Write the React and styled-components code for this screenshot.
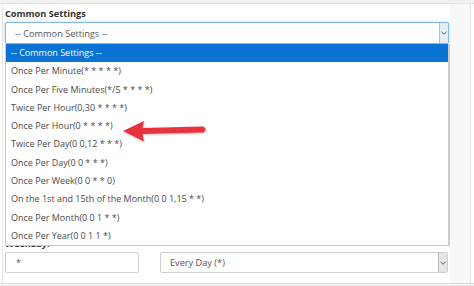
import React from "react";
import styled, { createGlobalStyle } from "styled-components";

const Global = createGlobalStyle`
  html, body {
    margin: 0;
    padding: 0;
    background: #f1f1f1;
  }
  body {
    font-family: "Open Sans", "Noto Sans", sans-serif;
  }
`;

const Frame = styled.div`
  width: 474px;
  height: 286px;
  box-sizing: border-box;
  padding-top: 3px;
  overflow: hidden;
  background: #f1f1f1;
`;

const Panel = styled.div`
  display: flex;
  height: 279px;
  border-top: 1px solid #e4e4e4;
  border-bottom: 1px solid #dedede;
  background: #fff;
`;

const Main = styled.div`
  position: relative;
  width: 448px;
  margin-left: 2px;
  border-left: 1px solid #e6e6e6;
  padding: 3px 2px 0 2px;
  box-sizing: border-box;
  display: flex;
  flex-direction: column;
`;

const Side = styled.div`
  width: 20px;
  background: #f8f8f8;
  border-right: 1px solid #e3e3e3;
`;

const Label = styled.div`
  font-size: 9.2px;
  line-height: 14px;
  font-weight: 700;
  color: #333;
  margin-top: ${p => p.top || 0}px;
  margin-bottom: 1px;
`;

const SelectWrap = styled.div`
  position: relative;
  width: ${p => p.width}px;
`;

const SelectBox = styled.div`
  height: ${p => p.h || 22}px;
  box-sizing: border-box;
  border: 1px solid ${p => (p.focused ? "#86b6e2" : "#cfcfcf")};
  border-radius: 2px;
  box-shadow: ${p => (p.focused ? "0 0 3px rgba(90,160,225,0.45)" : "none")};
  background: #fff;
  display: flex;
  align-items: center;
  justify-content: space-between;
  padding-left: 9px;
  font-size: 9.2px;
  color: #555;
`;

const ArrowBtn = styled.div`
  width: 9px;
  height: 100%;
  box-sizing: border-box;
  background: ${p => (p.focused ? "#e3edf7" : "#e6e6e6")};
  border-left: 1px solid ${p => (p.focused ? "#9fc3e6" : "#bdbdbd")};
  display: flex;
  align-items: center;
  justify-content: center;
`;

const DropList = styled.ul`
  position: absolute;
  top: 22px;
  left: 0;
  width: 445px;
  margin: 0;
  padding: 0;
  list-style: none;
  box-sizing: border-box;
  background: #fff;
  border: 1px solid #c9c9c9;
  border-right: 2px solid #cdcdcd;
  border-top: none;
  z-index: 2;
`;

const Item = styled.li`
  height: 18.3px;
  line-height: 18.3px;
  padding-left: 5px;
  font-size: 9px;
  color: ${p => (p.active ? "#fff" : "#4a4a4a")};
  background: ${p => (p.active ? "#0b73d3" : "transparent")};
  white-space: nowrap;
`;

const Row = styled.div`
  display: flex;
  gap: 21px;
`;

const TextInput = styled.div`
  width: 134px;
  height: 21px;
  box-sizing: border-box;
  border: 1px solid #d2d2d2;
  border-radius: 2px;
  padding-left: 10px;
  font-size: 9.2px;
  line-height: 19px;
  color: #555;
`;

const Pointer = styled.svg`
  position: absolute;
  left: 116px;
  top: 112px;
  z-index: 3;
`;

const Chevron = () => (
  <svg width="6" height="4" viewBox="0 0 6 4">
    <path d="M0.5 0.8 L3 3.2 L5.5 0.8" fill="none" stroke="#666" strokeWidth="1" />
  </svg>
);

const options = [
  "-- Common Settings --",
  "Once Per Minute(* * * * *)",
  "Once Per Five Minutes(*/5 * * * *)",
  "Twice Per Hour(0,30 * * * *)",
  "Once Per Hour(0 * * * *)",
  "Twice Per Day(0 0,12 * * *)",
  "Once Per Day(0 0 * * *)",
  "Once Per Week(0 0 * * 0)",
  "On the 1st and 15th of the Month(0 0 1,15 * *)",
  "Once Per Month(0 0 1 * *)",
  "Once Per Year(0 0 1 1 *)",
];

export default function App() {
  return (
    <Frame>
      <Global />
      <Panel>
        <Main>
          <Label>Common Settings</Label>
          <SelectWrap width={444}>
            <SelectBox focused>
              <span>-- Common Settings --</span>
              <ArrowBtn focused>
                <Chevron />
              </ArrowBtn>
            </SelectBox>
            <DropList>
              {options.map((o, i) => (
                <Item key={o} active={i === 0}>
                  {o}
                </Item>
              ))}
            </DropList>
          </SelectWrap>
          <Label top={193}>Weekday:</Label>
          <Row>
            <TextInput>*</TextInput>
            <SelectWrap width={288}>
              <SelectBox h={21}>
                <span>Every Day (*)</span>
                <ArrowBtn>
                  <Chevron />
                </ArrowBtn>
              </SelectBox>
            </SelectWrap>
          </Row>
          <Pointer width="92" height="30" viewBox="0 0 92 30">
            <defs>
              <filter id="sh" x="-10%" y="-30%" width="120%" height="160%">
                <feDropShadow dx="0.5" dy="1" stdDeviation="0.8" floodColor="#000" floodOpacity="0.25" />
              </filter>
            </defs>
            <g filter="url(#sh)" fill="#e8333c">
              <path d="M4 15 L25 5 L23.5 12 L84 10.5 Q89 13 84.5 16.5 L23.5 18 L25 25.5 Z" />
            </g>
          </Pointer>
        </Main>
        <Side />
      </Panel>
    </Frame>
  );
}
